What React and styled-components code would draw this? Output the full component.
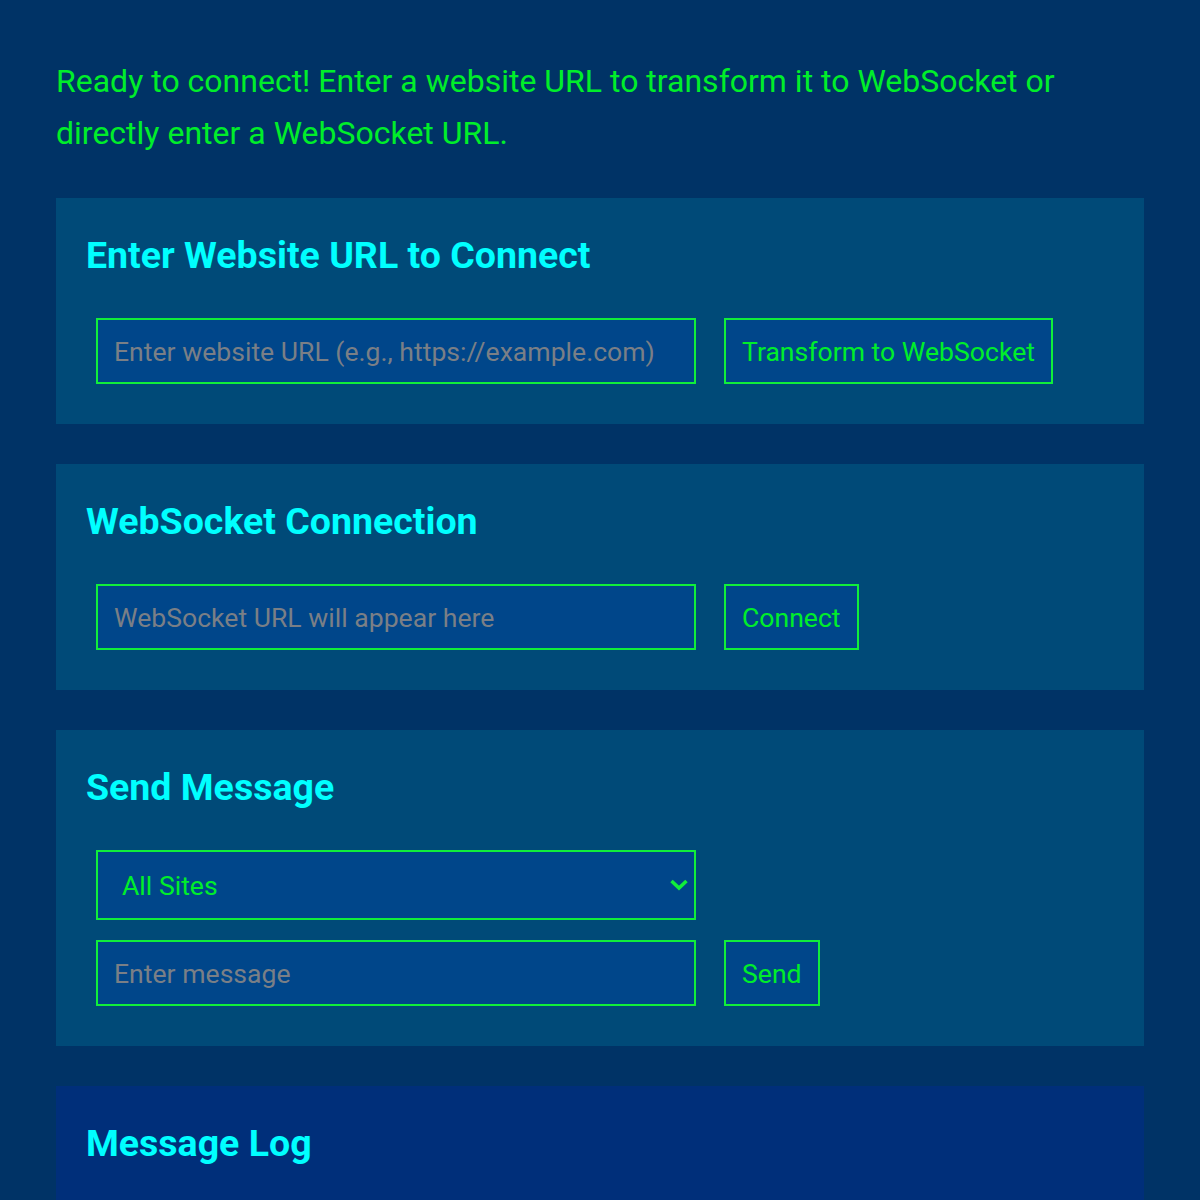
import React, {useState} from 'react';
import styled, {createGlobalStyle} from 'styled-components';

const GlobalStyle = createGlobalStyle`
  html, body {
    margin: 0;
    padding: 0;
    background: #003366;
  }
  body {
    font-family: Roboto, "Liberation Sans", Arial, sans-serif;
    color: #00ff33;
  }
`;

const Page = styled.div`
  padding: 55px 56px 0;
  min-height: 1200px;
  box-sizing: border-box;
`;

const Status = styled.p`
  margin: 0 0 39px;
  font-size: 32px;
  line-height: 52px;
  color: #00ee2a;
`;

const Panel = styled.section`
  background: ${props => (props.log ? '#002f7a' : '#004a78')};
  padding: 30px;
  margin-bottom: 40px;
`;

const Title = styled.h2`
  margin: 0;
  font-size: 37.5px;
  line-height: 54px;
  font-weight: 700;
  color: #00ffff;
`;

const Body = styled.div`
  margin-top: 26px;
  padding: 10px;
  display: flex;
  flex-direction: column;
  gap: 20px;
`;

const Row = styled.div`
  display: flex;
  align-items: center;
  gap: 28px;
`;

const Field = styled.input`
  box-sizing: border-box;
  width: 600px;
  height: 66px;
  padding: 0 16px;
  border: 2px solid #11ee3a;
  border-radius: 0;
  background: #00468a;
  color: #00ee2a;
  font-family: inherit;
  font-size: 26.6px;
  outline: none;

  &::placeholder {
    color: #7a7f86;
  }
`;

const Button = styled.button`
  box-sizing: border-box;
  height: 66px;
  padding: 0 16px;
  border: 2px solid #11ee3a;
  border-radius: 0;
  background: #00468a;
  color: #00ee2a;
  font-family: inherit;
  font-size: 26.6px;
  cursor: pointer;
`;

const SelectWrap = styled.div`
  position: relative;
  width: 600px;
`;

const Select = styled.select`
  appearance: none;
  box-sizing: border-box;
  width: 100%;
  height: 70px;
  padding: 0 48px 0 24px;
  border: 2px solid #11ee3a;
  border-radius: 0;
  background: #00468a;
  color: #00ee2a;
  font-family: inherit;
  font-size: 26.6px;
  outline: none;
`;

const Chevron = styled.svg`
  position: absolute;
  right: 7px;
  top: 50%;
  width: 20px;
  height: 14px;
  margin-top: -7px;
  pointer-events: none;
`;

const Section = ({title, log, children}) => (
  <Panel log={log}>
    <Title>{title}</Title>
    {children && <Body>{children}</Body>}
  </Panel>
);

export default function App() {
  const [site, setSite] = useState('all');

  return (
    <Page>
      <GlobalStyle />
      <Status>
        Ready to connect! Enter a website URL to transform it to WebSocket or directly enter a
        WebSocket URL.
      </Status>

      <Section title="Enter Website URL to Connect">
        <Row>
          <Field placeholder="Enter website URL (e.g., https://example.com)" />
          <Button>Transform to WebSocket</Button>
        </Row>
      </Section>

      <Section title="WebSocket Connection">
        <Row>
          <Field placeholder="WebSocket URL will appear here" />
          <Button>Connect</Button>
        </Row>
      </Section>

      <Section title="Send Message">
        <SelectWrap>
          <Select value={site} onChange={e => setSite(e.target.value)}>
            <option value="all">All Sites</option>
          </Select>
          <Chevron viewBox="0 0 20 14">
            <path d="M2.5 3 L10 10 L17.5 3" fill="none" stroke="#11ee3a" strokeWidth="3.5" />
          </Chevron>
        </SelectWrap>
        <Row>
          <Field placeholder="Enter message" />
          <Button>Send</Button>
        </Row>
      </Section>

      <Section title="Message Log" log />
    </Page>
  );
}
